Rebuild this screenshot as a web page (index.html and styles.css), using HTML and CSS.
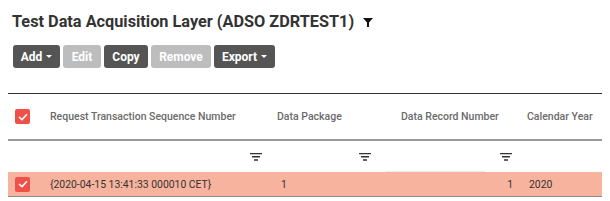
FILE: index.html
```html
<!DOCTYPE html>
<html>
<head>
<meta charset="utf-8">
<link rel="stylesheet" href="styles.css">
</head>
<body>
<div class="title">
  <span>Test Data Acquisition Layer (ADSO ZDRTEST1)</span>
  <svg class="funnel" width="10" height="9" viewBox="0 0 10 9"><path d="M0 0H10L6 4.5V9H4V4.5Z" fill="#111"/></svg>
</div>
<div class="toolbar">
  <div class="btn btn-add">Add<span class="caret"></span></div>
  <div class="btn btn-off btn-edit">Edit</div>
  <div class="btn btn-copy">Copy</div>
  <div class="btn btn-off btn-remove">Remove</div>
  <div class="btn btn-export">Export<span class="caret"></span></div>
</div>
<div class="table">
  <div class="row head">
    <div class="cell c0"><span class="check"><svg width="10" height="8" viewBox="0 0 10 8"><path d="M1 4L4 6.6L9 1.2" fill="none" stroke="#fff" stroke-width="1.6"/></svg></span></div>
    <div class="cell c1">Request Transaction Sequence Number</div>
    <div class="cell c2">Data Package</div>
    <div class="cell c3">Data Record Number</div>
    <div class="cell c4">Calendar Year</div>
  </div>
  <div class="row filters">
    <div class="cell c0"></div>
    <div class="cell c1 fcell"><svg class="ficon f1" width="12" height="8" viewBox="0 0 12 8"><path d="M0 0.5H12M2 3.8H10M4 7H8" stroke="#333" stroke-width="1.4"/></svg></div>
    <div class="cell c2 fcell"><svg class="ficon f2" width="12" height="8" viewBox="0 0 12 8"><path d="M0 0.5H12M2 3.8H10M4 7H8" stroke="#333" stroke-width="1.4"/></svg></div>
    <div class="cell c3 fcell"><span class="faint"></span><svg class="ficon f3" width="12" height="8" viewBox="0 0 12 8"><path d="M0 0.5H12M2 3.8H10M4 7H8" stroke="#333" stroke-width="1.4"/></svg></div>
    <div class="cell c4"></div>
  </div>
  <div class="row data selected">
    <div class="cell c0"><span class="check"><svg width="10" height="8" viewBox="0 0 10 8"><path d="M1 4L4 6.6L9 1.2" fill="none" stroke="#fff" stroke-width="1.6"/></svg></span></div>
    <div class="cell c1">{2020-04-15 13:41:33 000010 CET}</div>
    <div class="cell c2 dpkg">1</div>
    <div class="cell c3 num">1</div>
    <div class="cell c4 year">2020</div>
  </div>
</div>
</body>
</html>
```

FILE: styles.css
```css
body {
  margin: 8px;
  font-family: Roboto, "Liberation Sans", sans-serif;
  background: #fff;
}
.title {
  display: flex;
  align-items: center;
  gap: 9px;
  padding: 3px 4px 0;
  font-weight: 700;
  font-size: 16.3px;
  line-height: 22px;
  color: #333;
}
.funnel {
  margin-top: 1px;
}
.toolbar {
  display: flex;
  gap: 3px;
  margin-top: 12px;
  padding-left: 5px;
}
.btn {
  display: flex;
  align-items: center;
  justify-content: center;
  height: 23px;
  border-radius: 3px;
  background: #555;
  color: #fff;
  font-weight: 700;
  font-size: 12px;
  box-sizing: border-box;
}
.btn-off {
  background: #bdbdbd;
}
.btn-add { width: 47px; }
.btn-edit { width: 38px; }
.btn-copy { width: 44px; }
.btn-remove { width: 60px; }
.btn-export { width: 61px; }
.caret {
  width: 0;
  height: 0;
  margin-left: 4px;
  border-left: 3px solid transparent;
  border-right: 3px solid transparent;
  border-top: 3px solid #fff;
}
.table {
  margin-top: 25px;
  width: 597px;
  border-top: 1px solid #333;
}
.row {
  display: grid;
  grid-template-columns: 32px 227px 124px 126px 1fr;
  align-items: center;
}
.head {
  height: 45px;
  border-bottom: 2px solid #9a9a9a;
  border-right: 1px solid #e4e4e4;
  color: #6b6b6b;
  font-size: 10.5px;
  font-weight: 500;
}
.head .cell {
  padding-left: 10px;
}
.head .c0, .data .c0 {
  padding-left: 7px;
  display: flex;
}
.check {
  width: 15px;
  height: 15px;
  border-radius: 2px;
  background: #ef5148;
  display: flex;
  align-items: center;
  justify-content: center;
}
.filters {
  height: 31px;
}
.fcell {
  display: flex;
  justify-content: flex-end;
  align-items: center;
  height: 31px;
  position: relative;
}
.f1 { margin-right: 5px; }
.f2 { margin-right: 20px; }
.f3 { margin-right: 5px; }
.faint {
  position: absolute;
  left: -6px;
  bottom: 0;
  width: 100px;
  height: 1px;
  background: #ececec;
}
.data {
  height: 24px;
  font-size: 10.4px;
  color: #333;
  border-bottom: 1px solid #8e8e8e;
}
.selected {
  background: #f8b39e;
}
.data .c1 { padding-left: 10px; }
.dpkg { padding-left: 14px; }
.num { text-align: right; padding-right: 4px; }
.year { padding-left: 12px; }
```
